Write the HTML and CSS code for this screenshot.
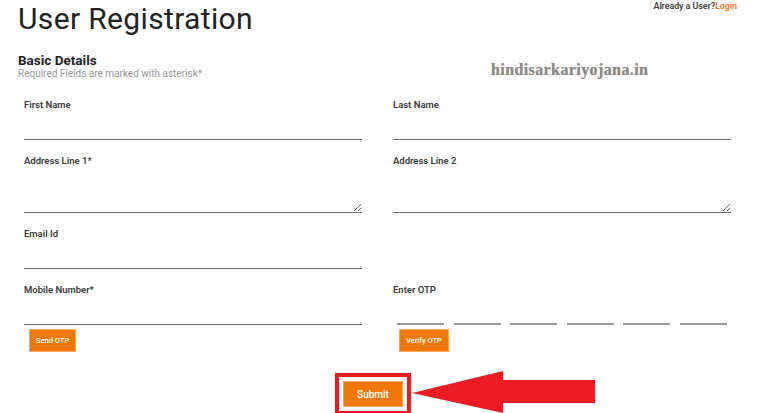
FILE: index.html
```html
<!DOCTYPE html>
<html lang="en">
<head>
  <meta charset="UTF-8">
  <title>User Registration</title>
  <link rel="stylesheet" href="styles.css">
</head>
<body>

<div class="page">
  <div class="top">
    <h1>User Registration</h1>
    <div class="login-link">Already a User?<a href="#">Login</a></div>
  </div>

  <h3>Basic Details</h3>
  <p class="hint">Required Fields are marked with asterisk*</p>

  <div class="watermark">hindisarkariyojana.in</div>

  <form id="regForm" class="form-grid" novalidate>
    <div class="field">
      <label for="firstName">First Name</label>
      <input type="text" id="firstName" name="firstName">
    </div>
    <div class="field">
      <label for="lastName">Last Name</label>
      <input type="text" id="lastName" name="lastName">
    </div>

    <div class="field">
      <label for="address1">Address Line 1*</label>
      <textarea id="address1" name="address1"></textarea>
    </div>
    <div class="field">
      <label for="address2">Address Line 2</label>
      <textarea id="address2" name="address2"></textarea>
    </div>

    <div class="field">
      <label for="email">Email Id</label>
      <input type="email" id="email" name="email">
    </div>
    <div class="field"></div>

    <div class="field">
      <label for="mobile">Mobile Number*</label>
      <input type="text" id="mobile" name="mobile">
      <button type="button" class="btn">Send OTP</button>
    </div>
    <div class="field">
      <label>Enter OTP</label>
      <div class="otp-boxes">
        <input type="text" maxlength="1">
        <input type="text" maxlength="1">
        <input type="text" maxlength="1">
        <input type="text" maxlength="1">
        <input type="text" maxlength="1">
        <input type="text" maxlength="1">
      </div>
      <button type="button" class="btn">Verify OTP</button>
    </div>
  </form>

  <div class="submit-row">
    <div class="highlight">
      <button type="submit" form="regForm" class="btn btn-submit">Submit</button>
    </div>
  </div>

  <svg class="arrow" width="190" height="46" viewBox="0 0 190 46">
    <polygon points="2,25 93,3 93,12 185,12 185,35 93,35 93,45" fill="#ec1c24"/>
  </svg>
</div>

</body>
</html>
```

FILE: styles.css
```css
body {
  margin: 0;
  font-family: Roboto, 'Liberation Sans', sans-serif;
  background: #fff;
  color: #222;
}

.page {
  position: relative;
  padding-left: 18px;
}

.top {
  display: flex;
  justify-content: space-between;
  align-items: flex-start;
  padding-right: 31px;
}

h1 {
  margin: 0;
  padding-top: 1px;
  font-size: 30px;
  font-weight: 400;
  line-height: 36px;
  letter-spacing: 0.35px;
  color: #222;
}

.login-link {
  margin-top: 1px;
  font-size: 9px;
  font-weight: 600;
  line-height: 11px;
  color: #444;
  letter-spacing: -0.1px;
}

.login-link a {
  color: #f07a1a;
  text-decoration: none;
}

h3 {
  margin: 16px 0 0;
  font-size: 13.5px;
  font-weight: 700;
  line-height: 14px;
  color: #222;
}

.hint {
  margin: 1px 0 0;
  font-size: 10px;
  line-height: 11px;
  color: #999;
}

.watermark {
  position: absolute;
  left: 491px;
  top: 61px;
  font-family: 'Liberation Serif', serif;
  font-weight: 700;
  font-size: 16px;
  letter-spacing: 0.4px;
  color: #8a8a8a;
  text-shadow: 0 0 1px #b9a59a;
}

.form-grid {
  display: grid;
  grid-template-columns: 338px 338px;
  column-gap: 31px;
  margin-top: 20px;
  padding-left: 6px;
}

.field {
  margin-bottom: 15px;
}

label {
  display: block;
  font-size: 9.5px;
  font-weight: 600;
  line-height: 12px;
  color: #3a3a3a;
}

input, textarea {
  display: block;
  box-sizing: border-box;
  width: 100%;
  height: 29px;
  border: none;
  border-bottom: 1px solid #707070;
  background: transparent;
  outline: none;
  font-family: inherit;
}

textarea {
  height: 46px;
}

.otp-boxes {
  display: flex;
  gap: 9.5px;
  padding-left: 4px;
}

.otp-boxes input {
  width: 47px;
  border-bottom: 2px solid #9a9a9a;
}

.btn {
  display: block;
  margin: 4px 0 0 5px;
  height: 23px;
  padding: 0 6px;
  background: #f07808;
  color: #fff;
  border: 1px solid #f6a860;
  font-family: inherit;
  font-size: 7.5px;
  font-weight: 500;
  cursor: pointer;
}

.field:last-child .btn {
  margin-left: 6px;
  padding: 0 6px;
}

.submit-row {
  display: flex;
  padding-left: 317px;
  margin-top: 6px;
}

.highlight {
  border: 4px solid #e81c24;
  padding: 4px;
}

.btn-submit {
  margin: 0;
  width: 60px;
  height: 26px;
  font-size: 10px;
}

.arrow {
  position: absolute;
  left: 410px;
  top: 368px;
}
```
